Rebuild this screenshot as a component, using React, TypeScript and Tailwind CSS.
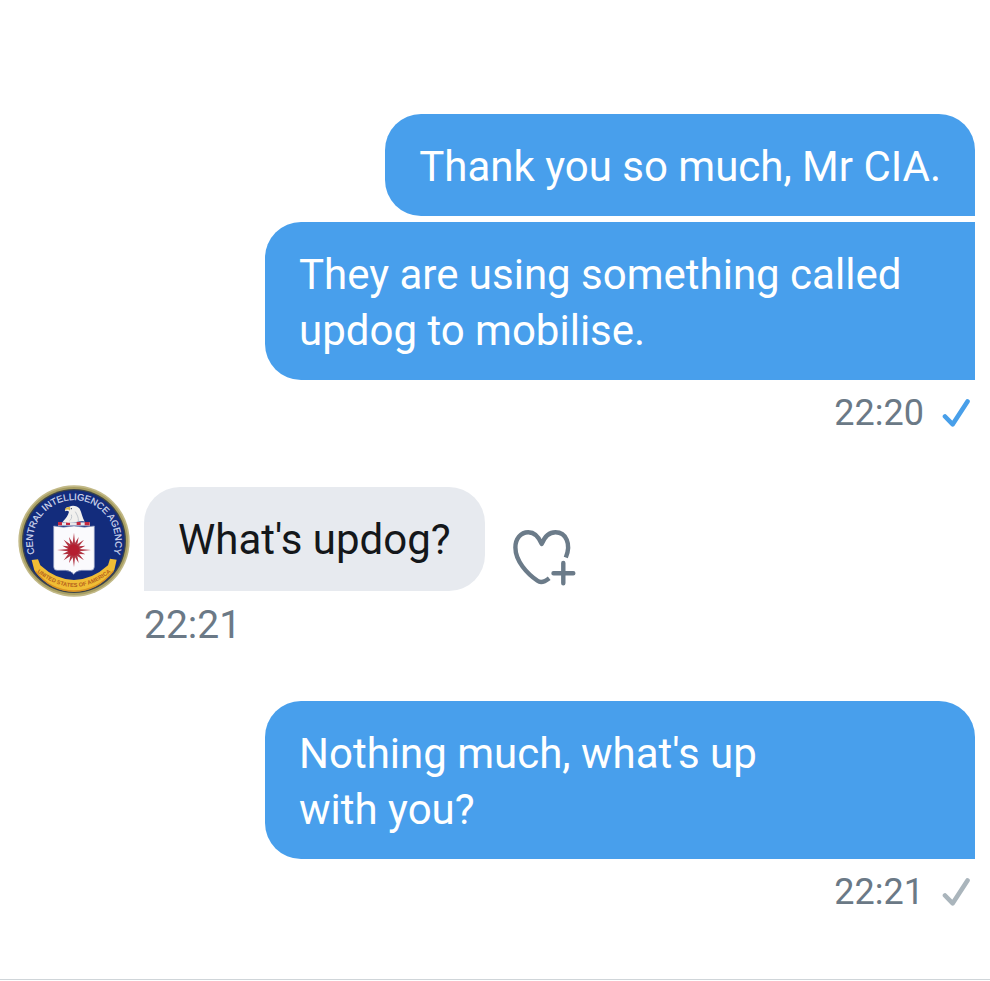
import clsx from 'clsx'

type Status = 'seen' | 'sent'

interface Message {
  id: number
  own: boolean
  text: string
  time?: string
  status?: Status
  wide?: boolean
  grouped?: boolean
}

const messages: Message[] = [
  { id: 1, own: true, text: 'Thank you so much, Mr CIA.' },
  { id: 2, own: true, wide: true, grouped: true, text: 'They are using something called updog to mobilise.', time: '22:20', status: 'seen' },
  { id: 3, own: false, text: "What's updog?", time: '22:21' },
  { id: 4, own: true, wide: true, text: "Nothing much, what's up\nwith you?", time: '22:21', status: 'sent' },
]

function Seal() {
  return (
    <svg viewBox="24 21 336 336" className="size-28 shrink-0" role="img" aria-label="Central Intelligence Agency">
      <defs>
        <path id="seal-top" d="M76 234A124 124 0 1 1 308 234" />
        <path id="seal-ribbon" d="M72 274Q192 380 312 274" />
      </defs>
      <circle cx="192" cy="189" r="167" fill="#c2b987" />
      <circle cx="192" cy="189" r="162" fill="#a89f63" />
      <circle cx="192" cy="189" r="156" fill="#3d4448" />
      <circle cx="192" cy="189" r="152" fill="#132c7c" />
      <text fill="#d6dcf0" stroke="#d6dcf0" strokeWidth="0.6" fontSize="28" fontFamily="Liberation Sans, sans-serif">
        <textPath href="#seal-top" startOffset="50%" textAnchor="middle">CENTRAL INTELLIGENCE AGENCY</textPath>
      </text>
      {/* torse and eagle head */}
      <path d="M144 133h96v10h-96z" fill="#e8e6ea" />
      <path d="M144 132h12v10h-12zM168 132h12v9h-12zM200 132h12v9h-12zM224 132h15v10h-15z" fill="#c4283f" />
      <path d="M158 131C168 121 174 112 177 101C172 97 169 98 165 100C164 91 171 86 178 86C187 80 202 83 209 92C215 103 217 119 224 131C205 126 190 140 158 131Z" fill="#f1f0ee" />
      <path d="M180 98C177 94 168 93 165 99C164 91 169 86 180 87Z" fill="#d7b649" />
      <path d="M196 101C201 111 206 117 205 129M184 110C187 119 183 125 178 129" fill="none" stroke="#c3c8ce" strokeWidth="3" />
      <circle cx="184" cy="92" r="2" fill="#333b55" />
      {/* ribbon */}
      <path d="M65 246L84 244L91 262Q137 305 192 306Q247 305 294 262L300 242L320 245L313 276Q262 341 192 341Q122 341 73 277Z" fill="#f0bd35" />
      <path d="M76 279Q122 339 192 339Q262 339 310 279" fill="none" stroke="#d99222" strokeWidth="4" />
      <text fill="#b5601c" fontSize="17" fontWeight="700" fontFamily="Liberation Sans, sans-serif">
        <textPath href="#seal-ribbon" startOffset="50%" textAnchor="middle">UNITED STATES OF AMERICA</textPath>
      </text>
      {/* shield with compass star */}
      <path d="M131 144Q160 151 192 144Q224 151 253 144V266Q253 277 242 277H215Q198 278 191 289Q184 278 166 277H142Q131 277 131 266Z" fill="#fafafd" stroke="#8e9abf" strokeWidth="2" />
      <path
        d="M192 164L195 195L206 177L202 199L222 185L207 205L226 203L209 213L243 216L209 220L226 229L207 228L222 247L202 234L206 255L195 238L192 267L188 238L177 255L181 234L161 247L175 228L157 229L174 220L141 216L174 213L157 203L175 205L161 185L181 199L177 177L188 195Z"
        fill="#b23443"
      />
      <circle cx="191" cy="216" r="17" fill="#b51e30" />
    </svg>
  )
}

function Check({ status }: { status: Status }) {
  return (
    <svg
      viewBox="0 0 28 28"
      className={clsx('size-7', status === 'seen' ? 'text-[#489fe9]' : 'text-[#aab5bc]')}
      fill="none"
      stroke="currentColor"
      strokeWidth="4.6"
      strokeLinecap="round"
      strokeLinejoin="round"
      role="img"
      aria-label={status === 'seen' ? 'Seen' : 'Sent'}
    >
      <path d="M3 17.5L10.7 25.3L25.5 2.5" />
    </svg>
  )
}

function ReactButton() {
  return (
    <button type="button" aria-label="Add reaction" className="mb-1 shrink-0 self-end text-[#6b7b89]">
      <svg viewBox="0 0 64 60" className="h-15 w-16" fill="none" stroke="currentColor" strokeWidth="4.4" strokeLinejoin="round">
        <path d="M52.8 30.5C58.5 17 53 5.3 42.5 5.3C35 5.3 31.5 10 28.7 17C25.8 10 22 5.3 15.3 5.3C7.5 5.3 2.4 12 2.4 20.5C2.4 34 14 46.5 24.5 53.8Q29 57 36.2 51.2" />
        <path d="M50.3 36V56.3M40.5 46.2H60.3" strokeLinecap="round" />
      </svg>
    </button>
  )
}

function Bubble({ message }: { message: Message }) {
  return (
    <p
      className={clsx(
        'max-w-full px-[34px] text-[42px] leading-[56px] whitespace-pre-line',
        message.own
          ? 'rounded-l-[36px] bg-[#489fec] pt-[25px] pb-[21px] text-white'
          : 'rounded-t-[36px] rounded-br-[36px] bg-[#e7eaef] pt-[25px] pb-[23px] text-[#14171a]',
        message.own && !message.grouped && 'rounded-tr-[36px]',
        message.wide && 'w-[710px]',
      )}
    >
      {message.text}
    </p>
  )
}

function Row({ message }: { message: Message }) {
  if (message.own) {
    return (
      <li className="flex flex-col items-end">
        <Bubble message={message} />
        {message.status && (
          <div className="flex items-center gap-[18px] pt-2 pr-[5px] text-[36px] leading-[50px] text-[#6b7986]">
            <time>{message.time}</time>
            <Check status={message.status} />
          </div>
        )}
      </li>
    )
  }

  return (
    <li className="mt-[41px] mb-[44px] flex items-start gap-[14px]">
      <Seal />
      <div className="pt-[2px]">
        <div className="flex items-center gap-7">
          <Bubble message={message} />
          <ReactButton />
        </div>
        <time className="block pt-2 text-[39px] leading-[52px] text-[#6b7986]">{message.time}</time>
      </div>
    </li>
  )
}

export default function App() {
  return (
    <main className="min-h-screen bg-white font-[Roboto,sans-serif]">
      <ul className="flex flex-col gap-[6px] border-b border-[#cfd5d9] pt-[114px] pr-[15px] pb-[62px] pl-[18px]">
        {messages.map((message) => (
          <Row key={message.id} message={message} />
        ))}
      </ul>
    </main>
  )
}
